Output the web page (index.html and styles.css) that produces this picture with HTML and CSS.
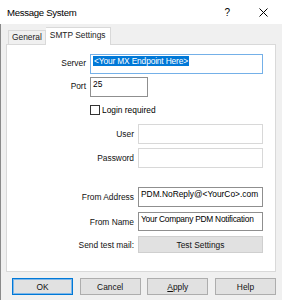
FILE: index.html
```html
<!DOCTYPE html>
<html lang="en">
<head>
    <meta charset="UTF-8">
    <title>Message System</title>
    <link rel="stylesheet" href="styles.css">
</head>
<body>
    <div class="window">
        <div class="titlebar">
            <span class="title">Message System</span>
            <span class="help">?</span>
            <svg class="close" width="9" height="9" viewBox="0 0 9 9">
                <path d="M0.5 0.5 L8.5 8.5 M8.5 0.5 L0.5 8.5" stroke="#000" stroke-width="1" fill="none"/>
            </svg>
        </div>
        <div class="client">
            <div class="tabs">
                <div class="tab">General</div>
                <div class="tab active">SMTP Settings</div>
            </div>
            <div class="panel">
                <div class="row server-row">
                    <label class="label short">Server</label>
                    <div class="field wide focused"><span class="selected">&lt;Your MX Endpoint Here&gt;</span></div>
                </div>
                <div class="row port-row">
                    <label class="label short">Port</label>
                    <div class="field port dark">25</div>
                </div>
                <div class="row check-row">
                    <span class="checkbox"></span>
                    <span>Login required</span>
                </div>
                <div class="row user-row">
                    <label class="label long">User</label>
                    <div class="field narrow light"></div>
                </div>
                <div class="row pass-row">
                    <label class="label long">Password</label>
                    <div class="field narrow light"></div>
                </div>
                <div class="row from-row">
                    <label class="label long">From Address</label>
                    <div class="field narrow dark">PDM.NoReply@&lt;YourCo&gt;.com</div>
                </div>
                <div class="row name-row">
                    <label class="label long">From Name</label>
                    <div class="field narrow dark name">Your Company PDM Notification</div>
                </div>
                <div class="row test-row">
                    <label class="label long">Send test mail:</label>
                    <button class="test-btn">Test Settings</button>
                </div>
            </div>
            <div class="buttons">
                <button class="btn default">OK</button>
                <button class="btn">Cancel</button>
                <button class="btn"><u>A</u>pply</button>
                <button class="btn">Help</button>
            </div>
        </div>
    </div>
</body>
</html>
```

FILE: styles.css
```css
body {
    margin: 0;
    padding: 0;
    font-family: 'Liberation Sans', Arial, sans-serif;
    font-size: 8.4px;
    color: #000;
    background-color: #f0f0f0;
}
.window {
    width: 282px;
    height: 300px;
    overflow: hidden;
}
.titlebar {
    height: 24px;
    background-color: #fff;
    display: flex;
    align-items: center;
    padding-left: 7px;
}
.title {
    font-size: 9.6px;
    letter-spacing: -0.3px;
    flex-grow: 1;
}
.help {
    font-size: 10px;
    margin-right: 29px;
}
.close {
    margin-right: 14px;
}
.client {
    height: 276px;
    border-left: 1px solid #8a8a8a;
    padding-top: 4px;
    box-sizing: border-box;
}
.tabs {
    display: flex;
    align-items: flex-end;
    margin-left: 7px;
    height: 16px;
    position: relative;
    z-index: 1;
}
.tab {
    height: 13px;
    line-height: 13px;
    padding: 0 3px;
    border: 1px solid #d9d9d9;
    border-bottom: none;
    background-color: #f0f0f0;
    color: #222;
}
.tab.active {
    height: 17px;
    line-height: 15px;
    margin-bottom: -1px;
    padding: 0 4px;
    background-color: #fff;
    border-left: none;
}
.panel {
    margin-left: 5px;
    width: 270px;
    height: 228px;
    box-sizing: border-box;
    border: 1px solid #d9d9d9;
    background-color: #fff;
    padding-top: 9px;
}
.row {
    display: flex;
    align-items: center;
}
.label {
    text-align: right;
    padding-right: 4px;
    box-sizing: border-box;
    color: #111;
}
.label.short {
    width: 83px;
}
.label.long {
    width: 131px;
}
.field {
    height: 20px;
    box-sizing: border-box;
    border: 1px solid #a0a0a0;
    background-color: #fff;
    padding: 1px 2px;
    line-height: 10px;
    white-space: nowrap;
    overflow: hidden;
}
.field.wide {
    width: 173px;
}
.field.port {
    width: 58px;
}
.field.narrow {
    width: 125px;
}
.field.focused {
    border-color: #74b0e8;
}
.field.light {
    border-color: #d8d8d8;
}
.field.dark {
    border-color: #8f8f8f;
}
.field.name {
    height: 19px;
    letter-spacing: -0.25px;
}
.selected {
    background-color: #0078d7;
    color: #fff;
    padding: 0 1px;
    letter-spacing: -0.15px;
}
.server-row .label,
.port-row .label {
    margin-bottom: 3px;
}
.port-row {
    margin-top: 3px;
}
.check-row {
    margin-top: 8px;
    padding-left: 83px;
    height: 10px;
}
.checkbox {
    width: 10px;
    height: 10px;
    box-sizing: border-box;
    border: 1px solid #333;
    background-color: #fff;
    margin-right: 2px;
}
.user-row {
    margin-top: 9px;
}
.pass-row {
    margin-top: 4px;
}
.from-row {
    margin-top: 19px;
}
.name-row {
    margin-top: 5px;
}
.test-row {
    margin-top: 5px;
}
.test-btn {
    width: 125px;
    height: 17px;
    padding: 0;
    font-family: inherit;
    font-size: inherit;
    background-color: #e1e1e1;
    border: 1px solid #cfcfcf;
    color: #111;
}
.buttons {
    display: flex;
    justify-content: space-between;
    width: 264px;
    margin-left: 11px;
    margin-top: 6px;
}
.btn {
    width: 61px;
    height: 17px;
    padding: 0;
    font-family: inherit;
    font-size: inherit;
    background-color: #e1e1e1;
    border: 1px solid #adadad;
    color: #111;
}
.btn.default {
    border-color: #0078d7;
    box-shadow: inset 0 0 0 1px #7fb7e8;
}
```
